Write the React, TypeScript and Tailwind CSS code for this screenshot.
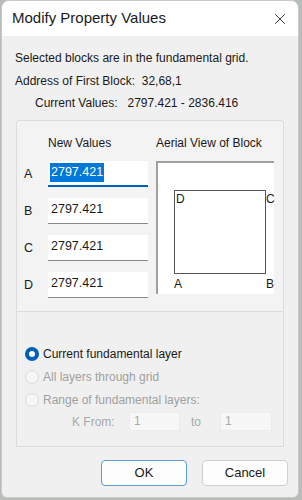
import { X } from "lucide-react";

const rows = ["A", "B", "C", "D"];

const Radio = ({ checked, disabled, label }: { checked?: boolean; disabled?: boolean; label: string }) => (
  <div className="flex items-center h-[23px]">
    {checked ? (
      <div className="w-[14px] h-[14px] rounded-full bg-[#005fb8] flex items-center justify-center">
        <div className="w-[6px] h-[6px] rounded-full bg-white" />
      </div>
    ) : (
      <div className="w-[14px] h-[14px] rounded-full border border-[#dadada] bg-[#f5f5f5]" />
    )}
    <span className={`ml-[4px] text-[12px] ${disabled ? "text-[#a0a0a0]" : "text-[#1a1a1a]"}`}>{label}</span>
  </div>
);

export default function App() {
  return (
    <div className="w-[302px] h-[500px] bg-[#b9bdb9] overflow-hidden" style={{ fontFamily: '"Liberation Sans", Arial, sans-serif' }}>
      <div className="w-[298px] h-[498px] ml-[1px] bg-[#f0f0f0] rounded-t-[8px] rounded-b-[6px] border border-[#c9c9c9] overflow-hidden">
        {/* Title bar */}
        <div className="h-[35px] bg-white flex items-center justify-between pl-[10px] pr-[9px]">
          <span className="text-[15px] text-[#1a1a1a]">Modify Property Values</span>
          <X size={18} strokeWidth={1.3} className="text-[#333]" />
        </div>

        {/* Info */}
        <div className="px-[13px] pt-[15px] text-[12px] text-[#1a1a1a] leading-[15px]">
          <div>Selected blocks are in the fundamental grid.</div>
          <div className="mt-[8px]">Address of First Block:&nbsp; 32,68,1</div>
          <div className="mt-[7px] pl-[20px]">Current Values:&nbsp;&nbsp; 2797.421 - 2836.416</div>
        </div>

        {/* Values group */}
        <div className="mx-[14px] mt-[9px] h-[192px] border border-[#dcdcdc] bg-[#f3f3f3] rounded-t-[3px] flex pt-[15px]">
          <div className="w-[139px] flex flex-col">
            <div className="pl-[31px] text-[12px] text-[#1a1a1a] leading-[15px]">New Values</div>
            <div className="flex flex-col gap-[11px] mt-[10px]">
              {rows.map((r, i) => (
                <div key={r} className="flex items-center h-[26px]">
                  <span className="w-[31px] pl-[7px] text-[12.5px] text-[#1a1a1a]">{r}</span>
                  <div
                    className={`w-[100px] h-[26px] bg-white flex items-start pt-[2px] pl-[2px] text-[12.5px] ${
                      i === 0 ? "border-b-2 border-[#005fb8]" : "border-b border-[#8a8a8a]"
                    }`}
                  >
                    {i === 0 ? (
                      <span className="bg-[#0078d7] text-white px-[1px]">2797.421</span>
                    ) : (
                      <span className="text-[#1a1a1a] px-[1px]">2797.421</span>
                    )}
                  </div>
                </div>
              ))}
            </div>
          </div>
          <div className="flex flex-col">
            <div className="text-[12px] text-[#1a1a1a] leading-[15px]">Aerial View of Block</div>
            <div className="mt-[10px] w-[118px] h-[133px] bg-white border-t-2 border-l-2 border-[#a0a0a0] flex pt-[27px] pl-[16px]">
              <div className="flex flex-col items-start">
                <div className="flex items-start">
                  <div className="w-[92px] h-[84px] border border-[#555] text-[12px] leading-[12px] pt-[2px] pl-[1px] text-[#1a1a1a]">D</div>
                  <span className="text-[12px] leading-[12px] mt-[3px] text-[#1a1a1a]">C</span>
                </div>
                <div className="flex w-[100px] justify-between text-[12px] leading-[12px] mt-[4px] text-[#1a1a1a]">
                  <span>A</span>
                  <span>B</span>
                </div>
              </div>
            </div>
          </div>
        </div>

        {/* Layer group */}
        <div className="mx-[14px] h-[135px] border border-t-0 border-[#dcdcdc] bg-[#f0f0f0] flex flex-col pl-[8px] pt-[30px]">
          <Radio checked label="Current fundamental layer" />
          <Radio disabled label="All layers through grid" />
          <Radio disabled label="Range of fundamental layers:" />
          <div className="flex items-center mt-[1px] text-[12px] text-[#a8a8a8]">
            <span className="ml-[47px] w-[57px]">K From:</span>
            <div className="w-[51px] h-[19px] bg-[#f7f7f7] border border-[#ececec] pl-[4px] leading-[17px]">1</div>
            <span className="ml-[11px] w-[29px]">to</span>
            <div className="w-[52px] h-[19px] bg-[#f7f7f7] border border-[#ececec] pl-[4px] leading-[17px]">1</div>
          </div>
        </div>

        {/* Buttons */}
        <div className="flex justify-end gap-[15px] pr-[10px] mt-[13px]">
          <button className="w-[86px] h-[26px] bg-[#fdfdfd] border border-[#5f9ed8] rounded-[4px] text-[13px] text-[#1a1a1a]">OK</button>
          <button className="w-[86px] h-[26px] bg-[#fdfdfd] border border-[#d0d0d0] rounded-[4px] text-[13px] text-[#1a1a1a]">Cancel</button>
        </div>
      </div>
    </div>
  );
}
